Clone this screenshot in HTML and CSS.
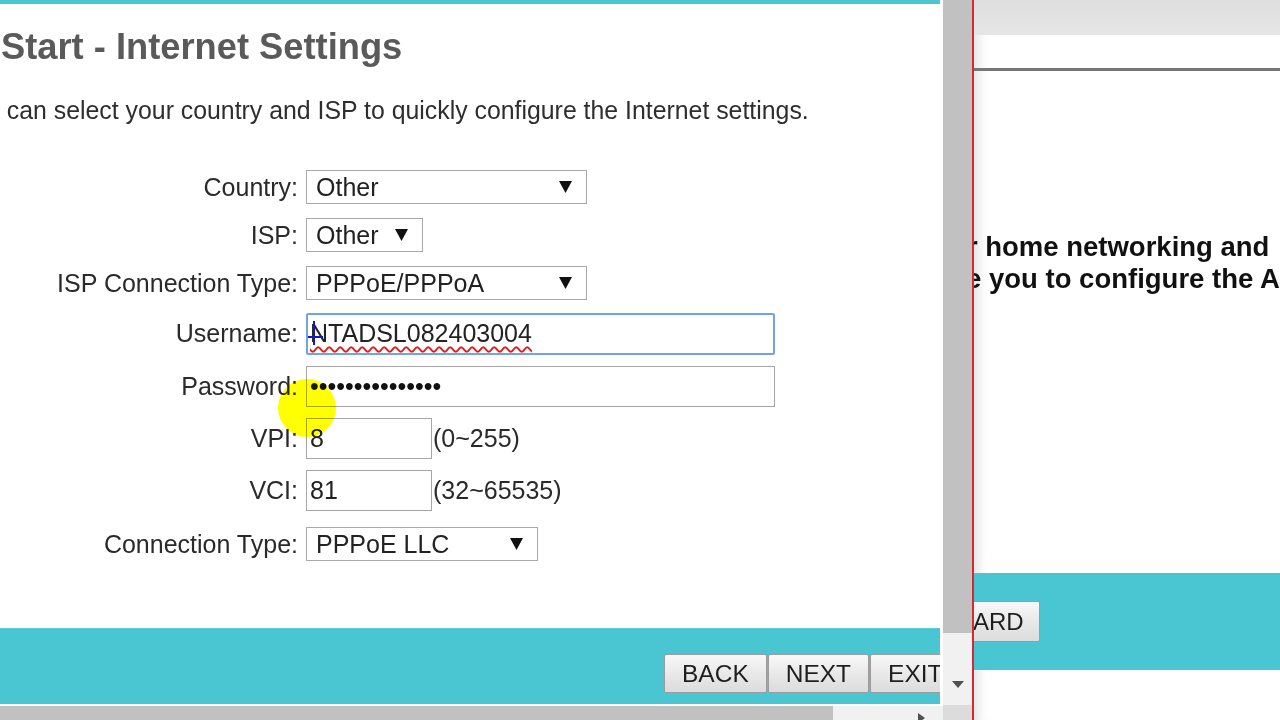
FILE: index.html
```html
<!DOCTYPE html>
<html lang="en">
<head>
<meta charset="utf-8">
<title>Quick Start - Internet Settings</title>
<link rel="stylesheet" href="styles.css">
</head>
<body>
<div class="screen">
  <div class="left">
    <div class="viewport">
      <div class="topbar"></div>
      <h1 class="title">Quick Start - Internet Settings</h1>
      <p class="intro">You can select your country and ISP to quickly configure the Internet settings.</p>
      <div class="form">
        <div class="row row-sel">
          <span class="lbl">Country:</span>
          <div class="select w-country"><span>Other</span><svg class="caret" viewBox="0 0 12 11"><polygon points="0,0 12,0 6,11"/></svg></div>
        </div>
        <div class="row row-sel">
          <span class="lbl">ISP:</span>
          <div class="select w-isp"><span>Other</span><svg class="caret" viewBox="0 0 12 11"><polygon points="0,0 12,0 6,11"/></svg></div>
        </div>
        <div class="row row-sel">
          <span class="lbl">ISP Connection Type:</span>
          <div class="select w-country"><span>PPPoE/PPPoA</span><svg class="caret" viewBox="0 0 12 11"><polygon points="0,0 12,0 6,11"/></svg></div>
        </div>
        <div class="row row-user">
          <span class="lbl">Username:</span>
          <div class="input w-long focus"><span class="typo">NTADSL082403004</span>
            <svg class="ibeam" viewBox="0 0 17 25"><line x1="7" y1="0" x2="7" y2="24"/><line x1="1" y1="16" x2="16" y2="16"/></svg>
          </div>
        </div>
        <div class="row row-in">
          <span class="lbl">Password:</span>
          <div class="input w-long"><span class="dots"><span class="dot-blue">•</span>••••••••••••••</span></div>
        </div>
        <div class="row row-in">
          <span class="lbl">VPI:</span>
          <div class="input w-short"><span>8</span></div>
          <span class="range">(0~255)</span>
        </div>
        <div class="row row-in">
          <span class="lbl">VCI:</span>
          <div class="input w-short"><span>81</span></div>
          <span class="range">(32~65535)</span>
        </div>
        <div class="row row-last">
          <span class="lbl">Connection Type:</span>
          <div class="select w-conn"><span>PPPoE LLC</span><svg class="caret" viewBox="0 0 12 11"><polygon points="0,0 12,0 6,11"/></svg></div>
        </div>
      </div>
      <div class="footer">
        <button class="btn">BACK</button>
        <button class="btn">NEXT</button>
        <button class="btn">EXIT</button>
      </div>
      <div class="highlight"></div>
    </div>
    <div class="hscroll">
      <div class="hthumb"></div>
      <div class="htrack"><svg class="harrow" viewBox="0 0 7 10"><polygon points="0,0 7,5 0,10"/></svg></div>
    </div>
  </div>
  <div class="vscroll">
    <div class="vthumb"></div>
    <div class="vtrack"><svg class="varrow" viewBox="0 0 12 7"><polygon points="0,0 12,0 6,7"/></svg></div>
    <div class="corner"></div>
  </div>
  <div class="divider"></div>
  <div class="right">
    <div class="rtop"></div>
    <div class="rgap"></div>
    <div class="rline"></div>
    <div class="rtext">
      <div class="rl1">your home networking and&nbsp; Internet access.</div>
      <div class="rl2">guide you to configure the ADSL Router.</div>
    </div>
    <div class="rband">
      <button class="btn rbtn">WIZARD</button>
    </div>
  </div>
</div>
</body>
</html>
```
FILE: styles.css
```css
* { box-sizing: border-box; }
html, body { margin: 0; padding: 0; }
body {
  width: 1280px;
  height: 720px;
  overflow: hidden;
  background: #fff;
  font-family: "Liberation Sans", Arial, sans-serif;
}
.screen { display: flex; width: 1280px; height: 720px; }

/* left frame */
.left { width: 943px; height: 720px; display: flex; flex-direction: column; flex: none; }
.viewport {
  position: relative;
  height: 706px;
  overflow: hidden;
  display: flex;
  flex-direction: column;
  background: #fff;
}
.topbar { height: 4px; width: 940px; background: #4ac6d2; flex: none; }
.title {
  margin: 22px 0 0 -110px;
  font-size: 36.3px;
  line-height: 42px;
  font-weight: bold;
  color: #5a5a5a;
  white-space: nowrap;
}
.intro {
  margin: 28px 0 0 -42px;
  font-size: 24.85px;
  line-height: 30px;
  color: #2e2e2e;
  white-space: nowrap;
}
.form { margin-top: 37px; display: flex; flex-direction: column; }
.row { display: flex; align-items: center; font-size: 25px; color: #2a2a2a; }
.row-sel { height: 48px; }
.row-user { height: 53px; }
.row-in { height: 52px; }
.row-last { height: 56px; }
.lbl { width: 298px; text-align: right; margin-right: 8px; white-space: nowrap; flex: none; }
.select {
  height: 34px;
  border: 1px solid #a9a9a9;
  background: #fff;
  display: flex;
  align-items: center;
  justify-content: space-between;
  padding: 0 14px 0 9px;
  color: #222;
  white-space: nowrap;
}
.w-country { width: 281px; }
.w-isp { width: 117px; }
.w-conn { width: 232px; }
.caret { width: 13px; height: 12px; fill: #111; flex: none; }
.input {
  position: relative;
  height: 41px;
  border: 1px solid #a6a6a6;
  background: #fff;
  display: flex;
  align-items: center;
  padding: 0 3px;
  color: #222;
  white-space: nowrap;
}
.input.focus { height: 42px; border: 2px solid #74a2e6; border-radius: 2px; padding: 0 2px; }
.w-long { width: 469px; }
.w-short { width: 126px; }
.range { margin-left: 1px; white-space: nowrap; }
.typo {
  text-decoration: underline wavy #e01c1c;
  text-decoration-thickness: 1.5px;
  text-underline-offset: 4px;
}
.ibeam {
  position: absolute;
  left: -1px;
  top: 6px;
  width: 17px;
  height: 25px;
  stroke: #1414c8;
  stroke-width: 2;
}
.dots { color: #111; }
.dot-blue { color: #1a1ab4; }

.footer {
  margin-top: auto;
  margin-bottom: 2px;
  width: 940px;
  height: 76px;
  flex: none;
  background: #4ac6d2;
  border-top: 1px solid #5ccbd6;
  padding: 25px 0 0 664px;
  display: flex;
  overflow: hidden;
}
.btn {
  font-family: "Liberation Sans", Arial, sans-serif;
  font-size: 24.5px;
  color: #1e1e1e;
  height: 39px;
  padding: 0 17px;
  margin: 0 1px 0 0;
  border: 1px solid #9c9c9c;
  border-radius: 2px;
  background: linear-gradient(#f8f8f8, #e9e9e9 50%, #dcdcdc);
  white-space: nowrap;
  flex: none;
  line-height: 37px;
}
.highlight {
  position: absolute;
  left: 278px;
  top: 379px;
  width: 58px;
  height: 58px;
  border-radius: 50%;
  background: #ffff00;
  mix-blend-mode: multiply;
}

.hscroll { height: 14px; display: flex; background: #f1f1f1; }
.hthumb { width: 833px; background: #c1c1c1; }
.htrack { flex: 1; position: relative; }
.harrow { position: absolute; left: 85px; top: 7px; width: 7px; height: 10px; fill: #505050; }

.vscroll { width: 29px; height: 720px; display: flex; flex-direction: column; flex: none; background: #f1f1f1; }
.vthumb { height: 633px; background: #c1c1c1; }
.vtrack { height: 72px; display: flex; align-items: flex-end; justify-content: center; padding-bottom: 17px; }
.varrow { width: 12px; height: 7px; fill: #505050; }
.corner { flex: 1; background: #dcdcdc; }
.divider { width: 2px; height: 720px; background: #d42a33; box-shadow: 1px 0 1px rgba(230, 120, 130, 0.5); flex: none; }

/* right frame */
.right {
  flex: 1;
  height: 720px;
  overflow: hidden;
  display: flex;
  flex-direction: column;
  background: #fff;
  box-shadow: inset 14px 0 12px -10px rgba(0, 0, 0, 0.12);
}
.rtop { height: 35px; background: linear-gradient(#dedede, #e6e6e6); flex: none; }
.rgap { height: 33px; flex: none; }
.rline { height: 3px; background: #767676; flex: none; }
.rtext {
  margin-top: 160px;
  font-size: 27.5px;
  line-height: 32px;
  font-weight: bold;
  color: #111;
}
.rl1, .rl2 { white-space: nowrap; }
.rl1 { margin-left: -56px; }
.rl2 { margin-left: -66px; }
.rband {
  margin-top: 278px;
  height: 97px;
  flex: none;
  background: #4ac6d2;
  padding-top: 28px;
  display: flex;
}
.rbtn { margin-left: -61px; height: 41px; font-size: 24px; padding: 0 15px; line-height: 39px; }
```
